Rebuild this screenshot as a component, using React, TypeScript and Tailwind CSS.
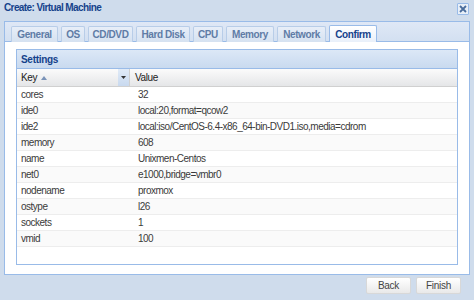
import React from 'react';

const tabs = [
  { label: 'General', w: 'w-[47px]' },
  { label: 'OS', w: 'w-[24px]' },
  { label: 'CD/DVD', w: 'w-[45px]' },
  { label: 'Hard Disk', w: 'w-[54px]' },
  { label: 'CPU', w: 'w-[30px]' },
  { label: 'Memory', w: 'w-[48px]' },
  { label: 'Network', w: 'w-[49px]' },
  { label: 'Confirm', w: 'w-[48px]', active: true },
];

const rows = [
  ['cores', '32'],
  ['ide0', 'local:20,format=qcow2'],
  ['ide2', 'local:iso/CentOS-6.4-x86_64-bin-DVD1.iso,media=cdrom'],
  ['memory', '608'],
  ['name', 'Unixmen-Centos'],
  ['net0', 'e1000,bridge=vmbr0'],
  ['nodename', 'proxmox'],
  ['ostype', 'l26'],
  ['sockets', '1'],
  ['vmid', '100'],
];

const App: React.FC = () => {
  return (
    <div className="w-[474px] h-[300px] bg-[#cfdcec] font-['Liberation_Sans',Arial,sans-serif] text-[10px] text-[#3a3a3a] overflow-hidden flex flex-col">
      {/* Title bar */}
      <div className="h-[21px] flex items-start justify-between pl-[4px] pr-[5px] pt-[2px]">
        <span className="text-[10px] leading-[12px] font-bold text-[#15428b] tracking-[-0.6px]">Create: Virtual Machine</span>
        <button className="w-[12px] h-[12px] mt-[1px] border border-[#99bbe8] bg-[#e8eff8] flex items-center justify-center rounded-[1px]">
          <svg width="8" height="8" viewBox="0 0 8 8">
            <path d="M1 1L7 7M7 1L1 7" stroke="#4a6d9c" strokeWidth="1.8" />
          </svg>
        </button>
      </div>

      {/* Tab panel */}
      <div className="mx-[4px] h-[254px] border border-[#99bbe8] flex flex-col">
        <div className="h-[20px] bg-gradient-to-b from-[#dfe8f6] to-[#d3e0f1] border-b border-[#99bbe8] flex items-end gap-[3px] pl-[6px]">
          {tabs.map(t => (
            <div
              key={t.label}
              className={`${t.w} -mb-px flex items-center justify-center border border-b-0 rounded-t-[2px] font-bold text-[10px] tracking-[-0.4px] ${
                t.active
                  ? 'bg-gradient-to-b from-[#ffffff] to-[#e9f0fa] border-[#99bbe8] text-[#15428b] h-[17px]'
                  : 'bg-gradient-to-b from-[#e7eef8] to-[#d6e2f1] border-[#b8cde8] text-[#5f7ca6] h-[16px]'
              }`}
            >
              {t.label}
            </div>
          ))}
        </div>

        <div className="flex-1 bg-white pt-[7px] px-[11px] pb-[9px] flex flex-col">
          {/* Settings grid */}
          <div className="flex-1 border border-[#99bbe8] flex flex-col">
            <div className="h-[19px] bg-gradient-to-b from-[#dce8f7] to-[#c9daef] border-b border-[#99bbe8] flex items-center pl-[4px]">
              <span className="font-bold text-[10px] text-[#15428b] tracking-[-0.3px]">Settings</span>
            </div>
            <div className="h-[18px] flex bg-gradient-to-b from-[#fbfbfb] to-[#e5e6e8] border-b border-[#d0d0d0] text-[#222] tracking-[-0.4px]">
              <div className="w-[113px] flex items-center justify-between pl-[4px] border-r border-[#d0d0d0]">
                <span className="flex items-center gap-[4px]">
                  Key
                  <svg width="6" height="4" viewBox="0 0 6 4">
                    <path d="M0 4L3 0L6 4Z" fill="#7a93b8" />
                  </svg>
                </span>
                <span className="w-[11px] h-full bg-gradient-to-b from-[#e1ebf7] to-[#c8d9ef] flex items-center justify-center">
                  <svg width="5" height="3" viewBox="0 0 5 3">
                    <path d="M0 0L5 0L2.5 3Z" fill="#333" />
                  </svg>
                </span>
              </div>
              <div className="flex-1 flex items-center pl-[5px]">Value</div>
            </div>
            <div className="flex-1 tracking-[-0.5px]">
              {rows.map(([k, v], i) => (
                <div
                  key={k}
                  className={`h-[16px] flex items-center border-b border-[#ededed] ${i % 2 ? 'bg-[#fafafa]' : 'bg-white'}`}
                >
                  <div className="w-[117px] pl-[4px]">{k}</div>
                  <div className="flex-1 pl-[4px] whitespace-nowrap">{v}</div>
                </div>
              ))}
            </div>
          </div>
        </div>
      </div>

      {/* Buttons */}
      <div className="flex-1 flex items-start justify-end gap-[5px] pt-[2px] pr-[13px]">
        {['Back', 'Finish'].map(b => (
          <button
            key={b}
            className="w-[45px] h-[17px] border border-[#d8d8d8] rounded-[2px] bg-gradient-to-b from-[#ffffff] to-[#e9e9e9] text-[10px] text-[#444] tracking-[-0.3px]"
          >
            {b}
          </button>
        ))}
      </div>
    </div>
  );
};

export default App;
